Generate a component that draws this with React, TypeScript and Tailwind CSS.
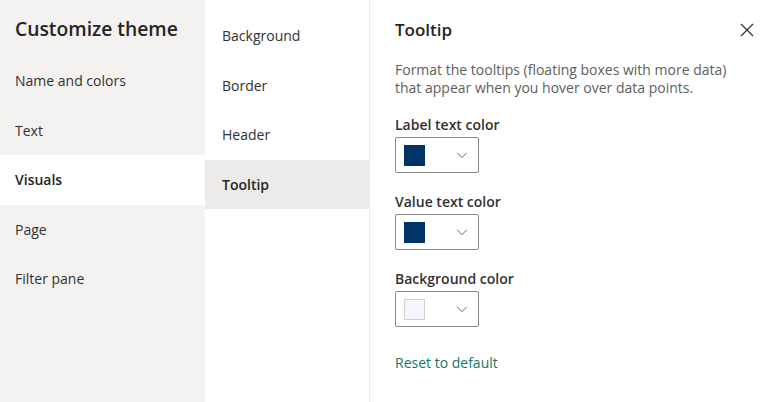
import * as React from 'react';

const sections = ['Name and colors', 'Text', 'Visuals', 'Page', 'Filter pane'];
const subsections = ['Background', 'Border', 'Header', 'Tooltip'];

function ColorPicker({ color, light }: { color: string; light?: boolean }) {
  return (
    <button className="mt-[2px] flex h-[36px] w-[84px] items-center rounded-[2px] border border-[#8a8886] bg-white pl-[8px] pr-[9px]">
      <span
        className={`h-[21px] w-[21px] ${light ? 'border border-[#d2d0ce]' : ''}`}
        style={{ background: color }}
      />
      <svg className="ml-auto" width="14" height="14" viewBox="0 0 16 16" fill="none">
        <path d="M2.5 5.5L8 11L13.5 5.5" stroke="#605e5c" strokeWidth="1.1" />
      </svg>
    </button>
  );
}

function Field({ label, color, light }: { label: string; color: string; light?: boolean }) {
  return (
    <div className="mt-[19px] first:mt-0">
      <div className="text-[14px] font-semibold leading-[20px] text-[#323130]">{label}</div>
      <ColorPicker color={color} light={light} />
    </div>
  );
}

export default function App() {
  const active = 'Visuals';
  const activeSub = 'Tooltip';
  return (
    <div className="flex h-[402px] w-[768px] bg-white text-[#323130] [font-family:'Open_Sans',sans-serif]">
      <nav className="flex w-[205px] shrink-0 flex-col bg-[#f3f2f1]">
        <h1 className="h-[56px] pl-[15px] pt-[14px] text-[19.3px] font-semibold leading-[30px] text-[#252423]">
          Customize theme
        </h1>
        {sections.map((s) => (
          <div
            key={s}
            className={`flex h-[49.5px] items-center pl-[15px] text-[14px] ${
              s === active ? 'bg-white font-semibold text-[#252423]' : 'text-[#323130]'
            }`}
          >
            {s}
          </div>
        ))}
      </nav>

      <div className="flex w-[165px] shrink-0 flex-col border-r border-[#edebe9] pt-[11px]">
        {subsections.map((s) => (
          <div
            key={s}
            className={`flex h-[49.5px] items-center pl-[17px] text-[14px] ${
              s === activeSub ? 'bg-[#edebe9] font-semibold text-[#252423]' : 'text-[#323130]'
            }`}
          >
            {s}
          </div>
        ))}
      </div>

      <section className="flex flex-1 flex-col pl-[25px] pr-[10px] pt-[17px]">
        <div className="flex items-start justify-between">
          <h2 className="text-[17px] font-semibold leading-[26px] text-[#252423]">Tooltip</h2>
          <button className="mr-[1px] mt-[3px] p-[2px]" aria-label="Close">
            <svg width="16" height="16" viewBox="0 0 16 16" fill="none">
              <path d="M2 2L14 14M14 2L2 14" stroke="#323130" strokeWidth="1.2" />
            </svg>
          </button>
        </div>
        <p className="mt-[18px] w-[340px] text-[14px] leading-[18px] text-[#605e5c]">
          Format the tooltips (floating boxes with more data) that appear when you hover over data points.
        </p>
        <div className="mt-[18px] flex flex-col">
          <Field label="Label text color" color="#003366" />
          <Field label="Value text color" color="#003366" />
          <Field label="Background color" color="#f3f6fb" light />
        </div>
        <a className="mt-[25px] text-[14px] text-[#117865]" href="#">
          Reset to default
        </a>
      </section>
    </div>
  );
}
